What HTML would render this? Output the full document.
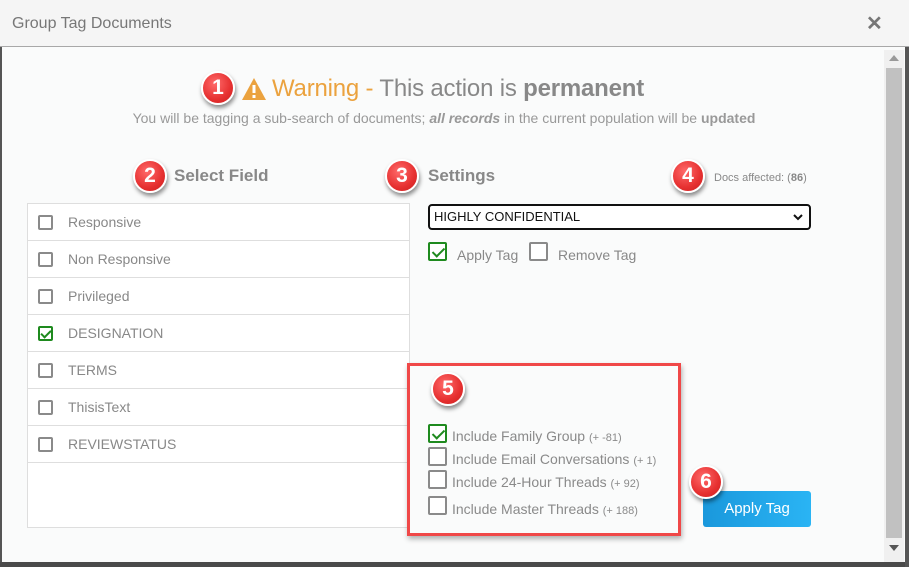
<!DOCTYPE html>
<html><head><style>
*{box-sizing:border-box;margin:0;padding:0}
body{width:909px;height:567px;background:#fafbfb;font-family:"Liberation Sans",sans-serif;position:relative;overflow:hidden;color:#888}
.abs{position:absolute}
.hdr{left:0;top:0;width:909px;height:47px;background:#f5f5f5;border-bottom:1px solid #a8a8a8}
.badge{position:absolute;width:34px;height:34px;border-radius:50%;background:radial-gradient(circle at 40% 35%,#ff6a6a,#e63030 60%,#c81e1e);border:2px solid #fff;box-shadow:1px 3px 4px rgba(0,0,0,.45);color:#fff;font-weight:bold;font-size:21px;text-align:center;line-height:30px}
.cb{position:absolute;width:15px;height:15px;border:2px solid #8a8a8a;border-radius:2px;background:#fff}
.cb.on{border-color:#1e8a1e}
.cb.on::after{content:"";position:absolute;left:3px;top:0px;width:4px;height:8px;border:solid #1e8a1e;border-width:0 2px 2px 0;transform:rotate(45deg)}
.row{position:absolute;left:28px;width:381px;height:37px;border-bottom:1px solid #dedede;font-size:14px;color:#888}
.row span{position:absolute;left:40px;top:10px}
.row .cb{left:10px;top:11px}
.big{width:19px;height:19px}
.big.on::after{left:5px;top:1px;width:5px;height:10px}
.inc{position:absolute;left:20px;font-size:14px;color:#8a8a8a}
.inc small{font-size:11px}
</style></head><body>
<div class="abs" style="left:0;top:0;width:2px;height:567px;background:#555"></div>
<div class="abs" style="left:0;top:562px;width:909px;height:5px;background:#4a4a4a"></div>
<div class="abs" style="left:905px;top:0;width:4px;height:567px;background:#555"></div>
<div class="abs hdr"><div class="abs" style="left:12px;top:15px;font-size:16px;color:#777">Group Tag Documents</div>
<div class="abs" style="left:866px;top:11px;font-size:20px;font-weight:bold;color:#777">✕</div></div>
<div class="abs" style="left:884px;top:50px;width:20px;height:512px;background:#f0f0f0"></div>
<div class="abs" style="left:886px;top:68px;width:16px;height:470px;background:#c1c1c1"></div>
<div class="abs" style="left:889px;top:55px;border:5px solid transparent;border-bottom:6px solid #999;border-top:0"></div>
<div class="abs" style="left:889px;top:545px;border:5px solid transparent;border-top:6px solid #555;border-bottom:0"></div>

<div class="badge" style="left:201px;top:71px">1</div>
<svg class="abs" style="left:241px;top:77px" width="26" height="24" viewBox="0 0 26 24"><path d="M13 1L25 23H1Z" fill="#eba23e"/><rect x="11.5" y="8" width="3" height="8" fill="#fff"/><rect x="11.5" y="18" width="3" height="3" fill="#fff"/></svg>
<div class="abs" style="left:272px;top:75px;font-size:24px;color:#eba23e;letter-spacing:-0.2px">Warning - <span style="color:#888">This action is <b>permanent</b></span></div>
<div class="abs" style="left:0;width:888px;top:110px;text-align:center;font-size:14px;color:#999">You will be tagging a sub-search of documents; <b><i>all records</i></b> in the current population will be <b>updated</b></div>

<div class="badge" style="left:133px;top:159px">2</div>
<div class="abs" style="left:174px;top:166px;font-size:17px;font-weight:bold;color:#888">Select Field</div>
<div class="badge" style="left:385px;top:159px">3</div>
<div class="abs" style="left:428px;top:166px;font-size:17px;font-weight:bold;color:#888">Settings</div>
<div class="badge" style="left:671px;top:159px">4</div>
<div class="abs" style="left:714px;top:172px;font-size:11px;color:#888">Docs affected: (<b>86</b>)</div>

<div class="abs" style="left:27px;top:203px;width:383px;height:325px;border:1px solid #dedede;background:#fff"></div>
<div class="row" style="top:204px"><div class="cb"></div><span>Responsive</span></div>
<div class="row" style="top:241px"><div class="cb"></div><span>Non Responsive</span></div>
<div class="row" style="top:278px"><div class="cb"></div><span>Privileged</span></div>
<div class="row" style="top:315px"><div class="cb on"></div><span>DESIGNATION</span></div>
<div class="row" style="top:352px"><div class="cb"></div><span>TERMS</span></div>
<div class="row" style="top:389px"><div class="cb"></div><span>ThisisText</span></div>
<div class="row" style="top:426px"><div class="cb"></div><span>REVIEWSTATUS</span></div>

<div class="abs" style="left:428px;top:204px;width:383px;height:26px;border:2px solid #111;border-radius:4px;background:#fff;font-size:13px;color:#111;padding:3px 4px">HIGHLY CONFIDENTIAL
<svg class="abs" style="right:6px;top:8px" width="10" height="7" viewBox="0 0 10 7"><path d="M1 1l4 4 4-4" stroke="#111" stroke-width="2" fill="none"/></svg></div>
<div class="cb big on" style="left:428px;top:242px"></div>
<div class="abs" style="left:457px;top:247px;font-size:14px">Apply Tag</div>
<div class="cb big" style="left:529px;top:242px"></div>
<div class="abs" style="left:558px;top:247px;font-size:14px">Remove Tag</div>

<div class="abs" style="left:407px;top:363px;width:274px;height:173px;border:3px solid #f04848;box-shadow:1px 3px 5px rgba(0,0,0,.3)">
<div class="badge" style="left:21px;top:6px">5</div>
<div class="cb big on" style="left:18px;top:58px"></div><div class="inc" style="left:42px;top:62px">Include Family Group <small>(+ -81)</small></div>
<div class="cb big" style="left:18px;top:81px"></div><div class="inc" style="left:42px;top:85px">Include Email Conversations <small>(+ 1)</small></div>
<div class="cb big" style="left:18px;top:104px"></div><div class="inc" style="left:42px;top:108px">Include 24-Hour Threads <small>(+ 92)</small></div>
<div class="cb big" style="left:18px;top:130px"></div><div class="inc" style="left:42px;top:135px">Include Master Threads <small>(+ 188)</small></div>
</div>
<div class="abs" style="left:703px;top:491px;width:108px;height:36px;border-radius:3px;background:linear-gradient(90deg,#1a98dc,#2ab4f4);color:#fff;font-size:15px;text-align:center;line-height:36px">Apply Tag</div>
<div class="badge" style="left:689px;top:465px">6</div>
</body></html>
